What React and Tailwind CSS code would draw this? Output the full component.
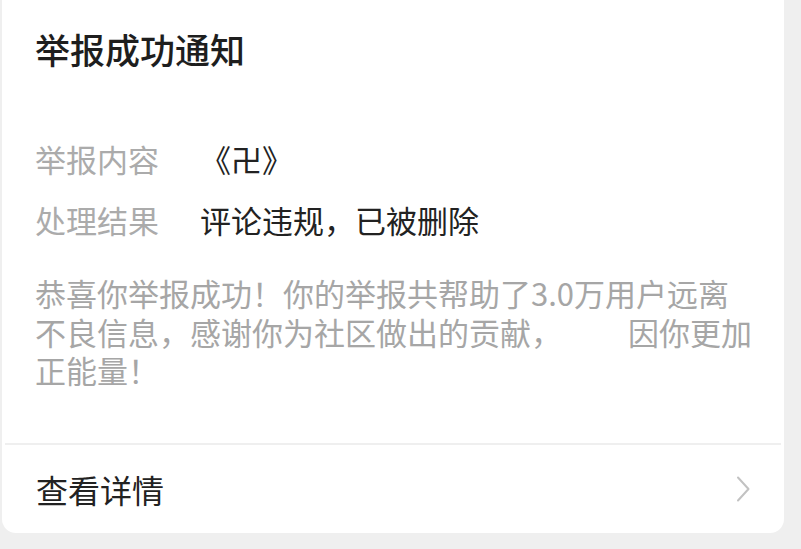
import React from 'react';

const FONT = "font-['Noto_Sans_CJK_SC','Noto_Sans',sans-serif]";

function InfoRow({ label, children }) {
  return (
    <div className="flex h-[44px] items-center">
      <span className="w-[165px] shrink-0 text-[31px] leading-[44px] text-[#ababab]">{label}</span>
      <span className="text-[31px] leading-[44px] text-[#222222]">{children}</span>
    </div>
  );
}

function ChevronRight() {
  return (
    <svg width="16" height="28" viewBox="0 0 16 28" fill="none">
      <path d="M3 2.5 L13.5 14 L3 25.5" stroke="#c2c2c2" strokeWidth="2" strokeLinecap="round" strokeLinejoin="round" />
    </svg>
  );
}

export default function App() {
  return (
    <div className={`w-[801px] h-[549px] overflow-hidden bg-[#efefef] ${FONT}`}>
      <div className="ml-[2px] flex h-[533px] w-[782px] flex-col rounded-b-[14px] bg-white">
        <div className="px-[33px] pt-[27px]">
          <h1 className="text-[35px] font-medium leading-[44px] text-[#1e1e1e]">举报成功通知</h1>

          <div className="mt-[66px] flex flex-col gap-[17px]">
            <InfoRow label="举报内容">《卍》</InfoRow>
            <InfoRow label="处理结果">评论违规，已被删除</InfoRow>
          </div>

          <div className="mt-[32px] flex flex-col text-[31px] leading-[38.5px] text-[#a6a6a6]">
            <span className="whitespace-nowrap">恭喜你举报成功！你的举报共帮助了3.0万用户远离</span>
            <span className="whitespace-nowrap">
              不良信息，感谢你为社区做出的贡献，<span className="inline-block w-[66px]" />因你更加
            </span>
            <span className="whitespace-nowrap">正能量！</span>
          </div>
        </div>

        <div className="mt-auto mx-[3px] h-[2px] bg-[#efefef]" />
        <div className="flex h-[88px] items-center justify-between pl-[34px] pr-[33px]">
          <span className="text-[32px] leading-[44px] text-[#222222]">查看详情</span>
          <ChevronRight />
        </div>
      </div>
    </div>
  );
}
